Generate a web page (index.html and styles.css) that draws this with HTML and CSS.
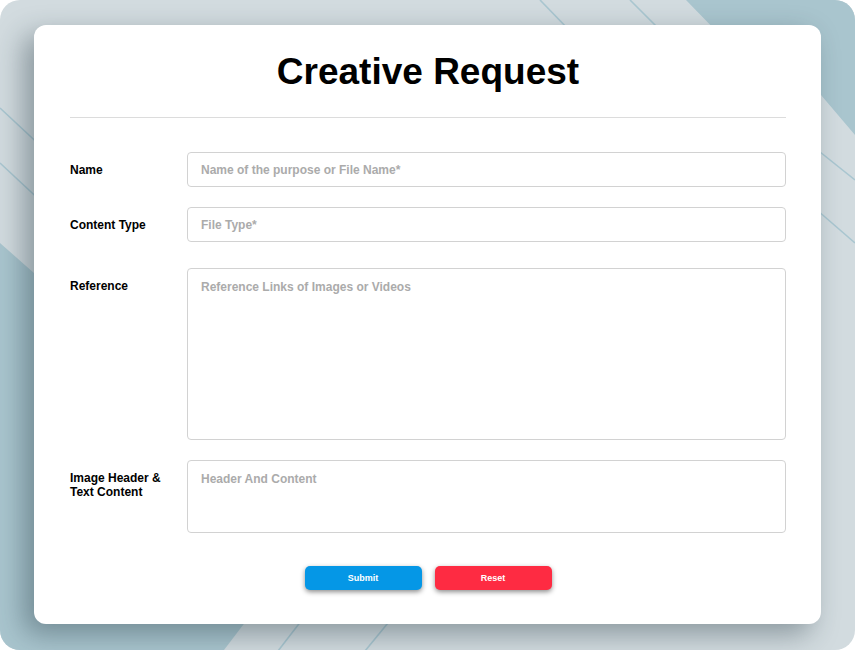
FILE: index.html
```html
<!DOCTYPE html>
<html lang="en">
<head>
  <meta charset="UTF-8" />
  <title>Creative Request</title>
  <link rel="stylesheet" href="styles.css">
</head>
<body>

<div class="frame">
  <!-- decorative background stripes -->
  <svg class="decor" viewBox="0 0 855 650" width="855" height="650">
    <polygon points="686,0 855,0 855,135 821,95 720,35" fill="#a9c5ce" />
    <polygon points="0,243 60,296 262,600 224,650 0,650" fill="#a9c5ce" />
    <g stroke="#a9c6d0" stroke-width="1.6">
      <line x1="540" y1="0" x2="600" y2="62" />
      <line x1="630" y1="0" x2="690" y2="60" />
      <line x1="810" y1="144" x2="855" y2="180" />
      <line x1="810" y1="204" x2="855" y2="243" />
      <line x1="0" y1="108" x2="45" y2="150" />
      <line x1="0" y1="163" x2="45" y2="205" />
      <line x1="325" y1="590" x2="278" y2="651" />
      <line x1="415" y1="590" x2="365" y2="651" />
    </g>
  </svg>

  <div class="card">
    <h1 class="title">Creative Request</h1>

    <form class="form">
      <div class="row">
        <label class="label" for="name">Name</label>
        <input class="field" id="name" type="text" placeholder="Name of the purpose or File Name*">
      </div>

      <div class="row">
        <label class="label" for="type">Content Type</label>
        <input class="field" id="type" type="text" placeholder="File Type*">
      </div>

      <div class="row row-top">
        <label class="label" for="ref">Reference</label>
        <textarea class="field area area-big" id="ref" placeholder="Reference Links of Images or Videos"></textarea>
      </div>

      <div class="row row-top">
        <label class="label" for="content">Image Header &amp;<br>Text Content</label>
        <textarea class="field area area-small" id="content" placeholder="Header And Content"></textarea>
      </div>

      <div class="actions">
        <button type="button" class="btn btn-submit">Submit</button>
        <button type="reset" class="btn btn-reset">Reset</button>
      </div>
    </form>
  </div>
</div>

</body>
</html>
```

FILE: styles.css
```css
/* page */
body {
  margin: 0;
  background: #fff;
  font-family: "Liberation Sans", Arial, sans-serif;
}

/* rounded backdrop behind the card */
.frame {
  position: relative;
  width: 855px;
  height: 650px;
  box-sizing: border-box;
  padding: 25px 34px 0 34px;
  background: #d2dbdf;
  border-radius: 20px;
  overflow: hidden;
}

.decor {
  position: absolute;
  left: 0;
  top: 0;
}

/* white form card */
.card {
  position: relative;
  width: 787px;
  height: 599px;
  box-sizing: border-box;
  padding: 25px 35px 0 36px;
  background: #fff;
  border-radius: 12px;
  box-shadow: -10px 10px 28px rgba(30, 50, 60, 0.4);
}

.title {
  margin: 0;
  font-size: 37px;
  line-height: 44px;
  font-weight: bold;
  text-align: center;
  color: #000;
  padding-bottom: 23px;
  border-bottom: 1px solid #dcdcdc;
}

.form {
  padding-top: 34px;
}

/* label + field rows */
.row {
  display: grid;
  grid-template-columns: 117px 1fr;
  align-items: center;
  margin-bottom: 20px;
}

.row-top {
  align-items: start;
}

.row-top .label {
  padding-top: 11px;
}

.row:nth-child(2) {
  margin-bottom: 26px;
}

.label {
  font-size: 12px;
  line-height: 14px;
  font-weight: bold;
  color: #000;
}

.field {
  display: block;
  box-sizing: border-box;
  width: 100%;
  height: 35px;
  margin: 0;
  padding: 0 13px;
  border: 1px solid #d2d2d2;
  border-radius: 4px;
  font-family: "Liberation Sans", Arial, sans-serif;
  font-size: 12px;
  font-weight: bold;
  color: #333;
  outline: none;
}

.field::placeholder {
  color: #ababab;
}

.area {
  padding: 11px 13px;
  line-height: 14px;
  resize: none;
}

.area-big {
  height: 172px;
}

.area-small {
  height: 73px;
}

/* buttons */
.actions {
  display: flex;
  justify-content: center;
  gap: 13px;
  padding-top: 13px;
}

.btn {
  width: 117px;
  height: 24px;
  border: none;
  border-radius: 5px;
  font-family: "Liberation Sans", Arial, sans-serif;
  font-size: 9px;
  font-weight: bold;
  color: #fff;
  cursor: pointer;
  box-shadow: 0 2px 5px rgba(0, 0, 0, 0.45);
}

.btn-submit {
  background: #0597e6;
}

.btn-reset {
  background: #fe2b42;
}
```
